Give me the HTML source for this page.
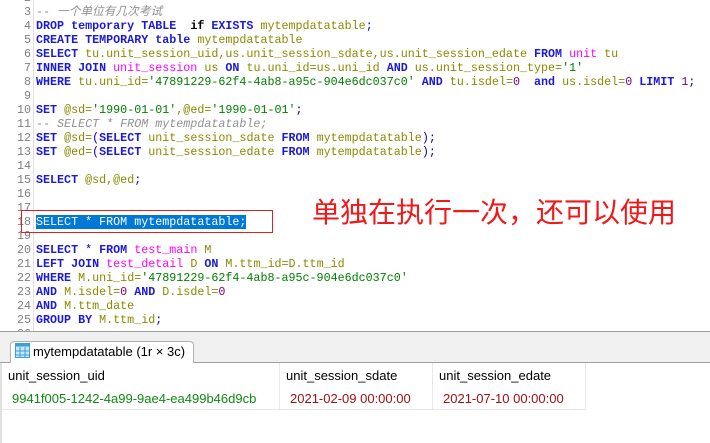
<!DOCTYPE html><html><head><style>
body{margin:0;width:710px;height:443px;overflow:hidden;background:#fff;font-family:"Liberation Sans","Noto Sans CJK SC",sans-serif}
#ed{position:absolute;left:0;top:0;width:710px;height:331px;background:#fff;border-bottom:1px solid #a0a0a0;overflow:hidden}
#gut{position:absolute;left:0;top:0;width:33px;height:331px;background:#fff;border-right:1px solid #e0e0e0}
.l{position:absolute;left:0;height:14px;line-height:14px;font-family:"Liberation Mono","Noto Sans CJK SC",monospace;font-size:11.7px;white-space:pre}
.n{width:31px;text-align:right;color:#808080}
.c{left:36px}
.k{color:#1a1ad8;font-weight:bold}
.i{color:#8a8a00}.s{color:#008000}.t{color:#ff00ff}.d{color:#800080}.p{color:#0000c0}
.m{color:#909090;font-style:italic}
.sel{background:#0078d7;color:#fff}
</style></head><body>
<div id="ed"><div id="gut"></div>
<div class="l n" style="top:-9px">2</div>
<div class="l n" style="top:5px">3</div><div class="l c m" style="top:5px">-- 一个单位有几次考试</div>
<div class="l n" style="top:19px">4</div><div class="l c" style="top:19px"><span class="k">DROP temporary TABLE</span>  <b>if</b> <span class="k">EXISTS</span> <span class="i">mytempdatatable</span><span class="p">;</span></div>
<div class="l n" style="top:33px">5</div><div class="l c" style="top:33px"><span class="k">CREATE TEMPORARY table</span> <span class="i">mytempdatatable</span></div>
<div class="l n" style="top:47px">6</div><div class="l c" style="top:47px"><span class="k">SELECT</span> <span class="i">tu.unit_session_uid,us.unit_session_sdate,us.unit_session_edate</span> <span class="k">FROM</span> <span class="t">unit</span> <span class="i">tu</span></div>
<div class="l n" style="top:61px">7</div><div class="l c" style="top:61px"><span class="k">INNER JOIN</span> <span class="t">unit_session</span> <span class="i">us</span> <span class="k">ON</span> <span class="i">tu.uni_id=us.uni_id</span> <span class="k">AND</span> <span class="i">us.unit_session_type=</span><span class="s">'1'</span></div>
<div class="l n" style="top:75px">8</div><div class="l c" style="top:75px"><span class="k">WHERE</span> <span class="i">tu.uni_id=</span><span class="s">'47891229-62f4-4ab8-a95c-904e6dc037c0'</span> <span class="k">AND</span> <span class="i">tu.isdel=</span><span class="d">0</span>  <span class="k">and</span> <span class="i">us.isdel=</span><span class="d">0</span> <span class="k">LIMIT</span> <span class="d">1</span><span class="p">;</span></div>
<div class="l n" style="top:89px">9</div>
<div class="l n" style="top:103px">10</div><div class="l c" style="top:103px"><span class="k">SET</span> <span class="i">@sd=</span><span class="s">'1990-01-01'</span><span class="i">,@ed=</span><span class="s">'1990-01-01'</span><span class="p">;</span></div>
<div class="l n" style="top:117px">11</div><div class="l c m" style="top:117px">-- SELECT * FROM mytempdatatable;</div>
<div class="l n" style="top:131px">12</div><div class="l c" style="top:131px"><span class="k">SET</span> <span class="i">@sd=</span><span class="p">(</span><span class="k">SELECT</span> <span class="i">unit_session_sdate</span> <span class="k">FROM</span> <span class="i">mytempdatatable</span><span class="p">);</span></div>
<div class="l n" style="top:145px">13</div><div class="l c" style="top:145px"><span class="k">SET</span> <span class="i">@ed=</span><span class="p">(</span><span class="k">SELECT</span> <span class="i">unit_session_edate</span> <span class="k">FROM</span> <span class="i">mytempdatatable</span><span class="p">);</span></div>
<div class="l n" style="top:159px">14</div>
<div class="l n" style="top:173px">15</div><div class="l c" style="top:173px"><span class="k">SELECT</span> <span class="i">@sd,@ed</span><span class="p">;</span></div>
<div class="l n" style="top:187px">16</div>
<div class="l n" style="top:201px">17</div>
<div class="l n" style="top:215px">18</div><div class="l c" style="top:215px"><span class="sel">SELECT * FROM mytempdatatable;</span></div>
<div class="l n" style="top:229px">19</div>
<div class="l n" style="top:243px">20</div><div class="l c" style="top:243px"><span class="k">SELECT</span> <span class="p">*</span> <span class="k">FROM</span> <span class="t">test_main</span> <span class="i">M</span></div>
<div class="l n" style="top:257px">21</div><div class="l c" style="top:257px"><span class="k">LEFT JOIN</span> <span class="t">test_detail</span> <span class="i">D</span> <span class="k">ON</span> <span class="i">M.ttm_id=D.ttm_id</span></div>
<div class="l n" style="top:271px">22</div><div class="l c" style="top:271px"><span class="k">WHERE</span> <span class="i">M.uni_id=</span><span class="s">'47891229-62f4-4ab8-a95c-904e6dc037c0'</span></div>
<div class="l n" style="top:285px">23</div><div class="l c" style="top:285px"><span class="k">AND</span> <span class="i">M.isdel=</span><span class="d">0</span> <span class="k">AND</span> <span class="i">D.isdel=</span><span class="d">0</span></div>
<div class="l n" style="top:299px">24</div><div class="l c" style="top:299px"><span class="k">AND</span> <span class="i">M.ttm_date</span></div>
<div class="l n" style="top:313px">25</div><div class="l c" style="top:313px"><span class="k">GROUP BY</span> <span class="i">M.ttm_id</span><span class="p">;</span></div>
<div class="l n" style="top:327px">26</div>
<div style="position:absolute;left:21px;top:210px;width:250px;height:21px;border:1px solid #e02020"></div>
<div style="position:absolute;left:312px;top:193px;font-size:28px;line-height:36px;color:#f01818;white-space:nowrap;font-family:'Noto Sans CJK SC',sans-serif">单独在执行一次，还可以使用</div>
</div>
<div style="position:absolute;left:0;top:332px;width:710px;height:30px;background:#f0f0f0;border-bottom:1px solid #a0a0a0"></div>
<div style="position:absolute;left:10px;top:341px;width:182px;height:21px;background:#fff;border:1px solid #b0b0b0;border-bottom:none;border-radius:4px 4px 0 0"></div>
<svg style="position:absolute;left:15px;top:343px" width="15" height="15"><rect x="0.5" y="0.5" width="14" height="14" fill="#cfe8f8" stroke="#3aa0d8"/><rect x="0.5" y="0.5" width="14" height="3" fill="#3aa0d8"/><path d="M5 4v11M10 4v11M1 8h14M1 12h14" stroke="#3aa0d8"/></svg>
<div style="position:absolute;left:33px;top:344px;font-size:13px;color:#000">mytempdatatable (1r × 3c)</div>
<div style="position:absolute;left:2px;top:363px;width:583px;height:46px;border-bottom:1px solid #e8e8e8"></div>
<div style="position:absolute;left:279px;top:363px;width:1px;height:47px;background:#e8e8e8"></div>
<div style="position:absolute;left:432px;top:363px;width:1px;height:47px;background:#e8e8e8"></div>
<div style="position:absolute;left:585px;top:363px;width:1px;height:47px;background:#e8e8e8"></div>
<div style="position:absolute;left:0;top:363px;width:2px;height:80px;background:#e0e0e0"></div>
<div style="position:absolute;left:8px;top:368px;font-size:13px">unit_session_uid</div>
<div style="position:absolute;left:286px;top:368px;font-size:13px">unit_session_sdate</div>
<div style="position:absolute;left:439px;top:368px;font-size:13px">unit_session_edate</div>
<div style="position:absolute;left:12px;top:391px;font-size:13px;color:#118811">9941f005-1242-4a99-9ae4-ea499b46d9cb</div>
<div style="position:absolute;left:290px;top:391px;font-size:13px;color:#a01010">2021-02-09 00:00:00</div>
<div style="position:absolute;left:443px;top:391px;font-size:13px;color:#a01010">2021-07-10 00:00:00</div>
</body></html>
